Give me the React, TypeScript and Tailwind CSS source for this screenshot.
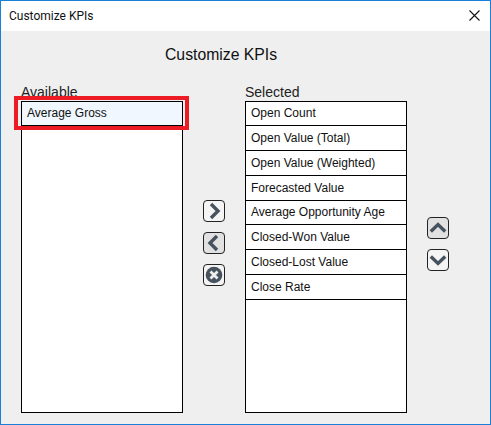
import React from "react";

const ARROWS: Record<string, string> = {
  right: "M8 4 L15 11 L8 18",
  left: "M14 4 L7 11 L14 18",
  up: "M3.8 14.5 L11 7.5 L18.2 14.5",
  down: "M3.8 7.5 L11 14.5 L18.2 7.5",
};

function IconButton({ kind, shaded }: { kind: string; shaded?: boolean }) {
  return (
    <button className={`w-[22px] h-[22px] rounded-[4px] border border-[#222222] flex items-center justify-center p-0 ${shaded ? "bg-[#e1e1e1]" : "bg-[#f4f4f4]"}`}>
      <svg width="20" height="20" viewBox="1 1 20 20">
        {kind === "close" ? (
          <>
            <circle cx="11" cy="11" r="8.3" fill="#46535f" />
            <path d="M7.5 7.5 L14.5 14.5 M14.5 7.5 L7.5 14.5" stroke="#eeeeee" strokeWidth="2.8" />
          </>
        ) : (
          <path d={ARROWS[kind]} fill="none" stroke="#46535f" strokeWidth="3.4" />
        )}
      </svg>
    </button>
  );
}

function Row({ text, selected, short }: { text: string; selected?: boolean; short?: boolean }) {
  return (
    <div className={`border-b border-black pl-[5px] flex items-center text-[12px] text-[#111111] ${short ? "h-[24px] pb-[2px]" : "h-[25px] pb-[1px]"} ${selected ? "bg-[#f0f7fe]" : ""}`}>
      {text}
    </div>
  );
}

function ListColumn({ label, items, highlight }: { label: string; items: string[]; highlight?: boolean }) {
  return (
    <div className="w-[162px] flex flex-col relative">
      <div className="h-[15px] text-[14px] leading-[13px] text-[#222222]">{label}</div>
      <div className="h-[312px] border border-black bg-white">
        {items.map((t, i) => (
          <Row key={t} text={t} short={i % 4 === 0} selected={highlight} />
        ))}
      </div>
      {highlight && (
        <div className="absolute left-[-7px] top-[10px] w-[175px] h-[34px] border-[4px] border-[#ed1c24]" />
      )}
    </div>
  );
}

export default function App() {
  return (
    <div className="w-[491px] h-[425px] border border-t-0 border-[#1a7fd8] bg-[#efefef] flex flex-col overflow-hidden" style={{ fontFamily: '"Liberation Sans", Arial, sans-serif' }}>
      <div className="h-[31px] shrink-0 bg-white flex items-center justify-between pl-[8px] pr-[10px] border-t border-[#1a7fd8]">
        <span className="text-[12px] text-[#111111]" style={{ fontFamily: 'Roboto, sans-serif' }}>Customize KPIs</span>
        <svg className="mb-[2px]" width="11" height="11" viewBox="0 0 11 11">
          <path d="M0.5 0.5 L10.5 10.5 M10.5 0.5 L0.5 10.5" stroke="#111111" strokeWidth="1.1" />
        </svg>
      </div>
      <div className="h-[55px] shrink-0 pl-[164px] pt-[14px] text-[15.75px] leading-[19px] text-[#111111]">Customize KPIs</div>
      <div className="flex pl-[20px]">
        <ListColumn label="Available" items={["Average Gross"]} highlight />
        <div className="ml-[20px] mt-[114px] flex flex-col gap-[10px]">
          <IconButton kind="right" />
          <IconButton kind="left" shaded />
          <IconButton kind="close" />
        </div>
        <div className="ml-[20px]">
          <ListColumn
            label="Selected"
            items={[
              "Open Count",
              "Open Value (Total)",
              "Open Value (Weighted)",
              "Forecasted Value",
              "Average Opportunity Age",
              "Closed-Won Value",
              "Closed-Lost Value",
              "Close Rate",
            ]}
          />
        </div>
        <div className="ml-[20px] mt-[131px] flex flex-col gap-[10px]">
          <IconButton kind="up" shaded />
          <IconButton kind="down" />
        </div>
      </div>
    </div>
  );
}
